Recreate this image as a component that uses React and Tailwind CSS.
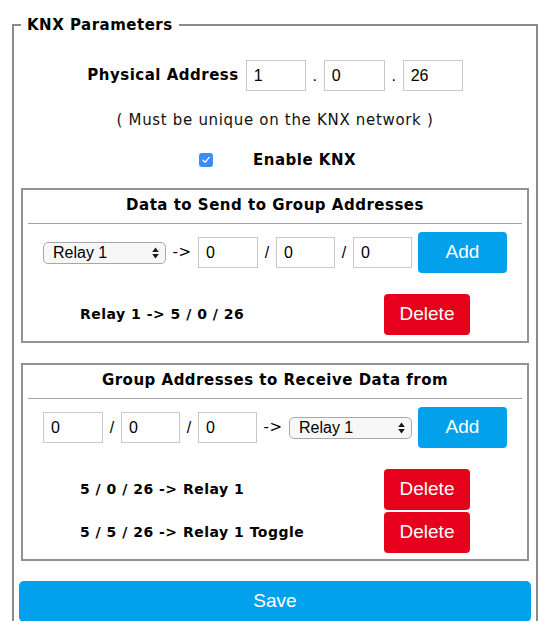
import React from 'react';

const verdana = "font-['DejaVu_Sans',Verdana,sans-serif]";
const helv = "font-['Liberation_Sans',Arial,sans-serif]";

const Field = ({ value, w = 'w-[60px]' }) => (
  <input
    readOnly
    value={value}
    className={`${w} h-[31px] border border-[#c9c9c9] bg-white px-[7px] text-[16px] text-black outline-none ${helv}`}
  />
);

const Sep = ({ children, w = 'w-[18px]' }) => (
  <span className={`${w} text-center text-[16px] text-black ${helv}`}>{children}</span>
);

const Arrow = () => (
  <span className={`w-[32px] text-center text-[15px] tracking-[0.5px] text-black ${verdana}`}>-&gt;</span>
);

const RelaySelect = () => (
  <div className={`w-[123px] h-[22px] flex items-center justify-between pl-[9px] pr-[6px] rounded-[5px] border border-[#a8a8a8] bg-[#f7f7f7] text-[16px] text-black ${helv}`}>
    <span>Relay 1</span>
    <svg width="7" height="12" viewBox="0 0 7 12">
      <path d="M3.5 0.5L6.8 5H0.2z M3.5 11.5L0.2 7H6.8z" fill="#1a1a1a" />
    </svg>
  </div>
);

const AddButton = () => (
  <button className={`w-[89px] h-[41px] rounded-[4px] bg-[#03a1ec] text-white text-[19px] ${helv}`}>
    Add
  </button>
);

const DeleteButton = () => (
  <button className={`w-[86px] h-[41px] rounded-[4px] bg-[#e6001c] text-white text-[19px] ${helv}`}>
    Delete
  </button>
);

const Entries = ({ items }) => (
  <div className="mt-[21px] mx-auto w-[390px] flex flex-col gap-[2px]">
    {items.map((text) => (
      <div key={text} className="grid grid-cols-[304px_86px] items-center">
        <span className={`text-[14px] font-bold tracking-[0.5px] text-black ${verdana}`}>{text}</span>
        <DeleteButton />
      </div>
    ))}
  </div>
);

const Box = ({ title, children }) => (
  <div className="border-2 border-[#929292] pt-[6px] pb-[6px]">
    <div className={`text-center text-[15px] leading-[18px] font-bold tracking-[0.5px] text-black ${verdana}`}>{title}</div>
    <div className="mt-[9px] mx-[5px] border-t border-[#a3a3a3]" />
    {children}
  </div>
);

export default function App() {
  return (
    <div className="bg-white w-[542px] h-[621px] overflow-hidden pt-[16px]">
      <fieldset className="ml-[12px] w-[526px] border-2 border-[#8a8a8a] px-[7px] pt-[26px] pb-[20px]">
        <legend className={`ml-0 px-[6px] text-[15px] leading-[18px] font-bold tracking-[0.5px] text-black ${verdana}`}>
          KNX Parameters
        </legend>

        <div className="flex items-center justify-center">
          <span className={`text-[15px] font-bold tracking-[0.5px] text-black mr-[7px] ${verdana}`}>Physical Address</span>
          <Field value="1" />
          <Sep>.</Sep>
          <Field value="0" w="w-[61px]" />
          <Sep>.</Sep>
          <Field value="26" />
        </div>

        <p className={`mt-[20px] text-center text-[15px] leading-[18px] tracking-[0.68px] text-[#111] ${verdana}`}>
          ( Must be unique on the KNX network )
        </p>

        <div className="mt-[22px] flex items-center justify-center gap-[40px] pl-[5px] h-[18px]">
          <span className="w-[14px] h-[14px] rounded-[3px] bg-[#3b8df5] flex items-center justify-center">
            <svg width="10" height="10" viewBox="0 0 10 10">
              <path d="M2 5.3L4.1 7.4L8.2 2.4" fill="none" stroke="white" strokeWidth="1.3" strokeLinecap="round" strokeLinejoin="round" />
            </svg>
          </span>
          <span className={`text-[15px] font-bold tracking-[0.5px] text-black ${verdana}`}>Enable KNX</span>
        </div>

        <div className="mt-[19px]">
          <Box title="Data to Send to Group Addresses">
            <div className="mt-[8px] flex items-center justify-center">
              <RelaySelect />
              <Arrow />
              <Field value="0" />
              <Sep>/</Sep>
              <Field value="0" w="w-[59px]" />
              <Sep>/</Sep>
              <Field value="0" w="w-[59px]" />
              <span className="w-[6px]" />
              <AddButton />
            </div>
            <Entries items={['Relay 1 -> 5 / 0 / 26']} />
          </Box>
        </div>

        <div className="mt-[20px]">
          <Box title="Group Addresses to Receive Data from">
            <div className="mt-[8px] flex items-center justify-center">
              <Field value="0" />
              <Sep>/</Sep>
              <Field value="0" w="w-[59px]" />
              <Sep>/</Sep>
              <Field value="0" w="w-[59px]" />
              <Arrow />
              <RelaySelect />
              <span className="w-[6px]" />
              <AddButton />
            </div>
            <Entries items={['5 / 0 / 26 -> Relay 1', '5 / 5 / 26 -> Relay 1 Toggle']} />
          </Box>
        </div>

        <button className={`mt-[20px] -mx-[2px] w-[512px] h-[41px] rounded-[5px] bg-[#03a1ec] text-white text-[19px] ${helv}`}>
          Save
        </button>
      </fieldset>
    </div>
  );
}
